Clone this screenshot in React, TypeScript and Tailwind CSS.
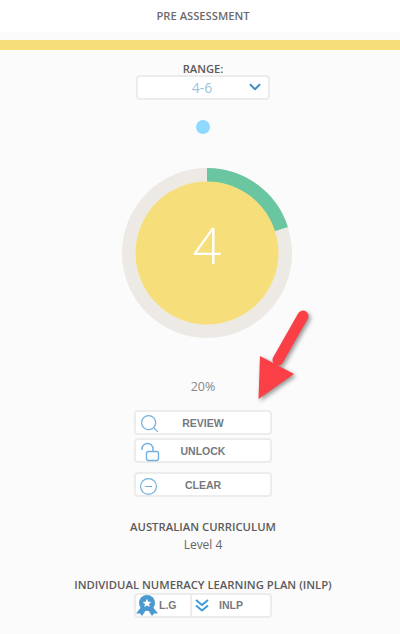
import React from 'react';
import { ChevronDown, Search, CircleMinus } from 'lucide-react';

function ActionButton({ icon, label, className = '' }: { icon: React.ReactNode; label: string; className?: string }) {
  return (
    <button
      className={`relative flex h-[25px] w-[138px] items-center justify-center rounded-[4px] border-2 border-[#ececec] bg-white pt-[2px] text-[10.5px] font-bold text-[#75797e] ${className}`}
      style={{ fontFamily: '"Liberation Sans", sans-serif' }}
    >
      {icon}
      {label}
    </button>
  );
}

export default function App() {
  return (
    <div
      className="relative h-[634px] w-[400px] overflow-hidden bg-[#fbfbfb] text-[#555]"
      style={{ fontFamily: '"Open Sans", "Liberation Sans", sans-serif' }}
    >
      <header className="flex h-[32px] items-center justify-center bg-white pl-[6px] text-[11.2px] font-semibold text-[#6b6b6b]">
        PRE ASSESSMENT
      </header>
      <div className="mt-[8px] h-[10px] bg-[#f6df7a]" />

      <main className="flex flex-col items-center pl-[6px]">
        <div className="mt-[11px] text-[11.2px] leading-[15px] font-semibold text-[#5a5a5a]">RANGE:</div>
        <div className="relative -mt-[1px] flex h-[25px] w-[134px] items-center justify-center rounded-[4px] border-2 border-[#ececec] bg-white pr-[2px] text-[14px] text-[#9dc3e0]">
          4-6
          <ChevronDown className="absolute right-[4px] top-[1px] h-[18px] w-[18px] text-[#3f8fc4]" strokeWidth={2.5} />
        </div>

        <div className="mt-[20px] h-[14px] w-[14px] rounded-full bg-[#8fd8ff]" />

        <div className="relative ml-[8px] mt-[34px] h-[170px] w-[170px]">
          <svg width="170" height="170" viewBox="0 0 170 170">
            <circle cx="85" cy="85" r="78" fill="none" stroke="#edeae5" strokeWidth="14" />
            <circle
              cx="85"
              cy="85"
              r="78"
              fill="none"
              stroke="#69c6a0"
              strokeWidth="14"
              strokeDasharray="98 392"
              transform="rotate(-90 85 85)"
            />
            <circle cx="85" cy="85" r="71.5" fill="#f6df7a" />
          </svg>
          <div className="absolute inset-0 flex items-center justify-center pb-[16px] text-[50px] font-light text-white">4</div>
        </div>

        <div className="mt-[41px] text-[12.500px] leading-[16px] text-[#888]">20%</div>

        <ActionButton
          className="mt-[15px]"
          label="REVIEW"
          icon={<Search className="absolute left-[3px] top-[1px] h-[21px] w-[21px] text-[#6fb1dc]" strokeWidth={1.4} />}
        />
        <ActionButton
          className="mt-[3px]"
          label="UNLOCK"
          icon={
            <svg className="absolute left-[5px] top-[2px] text-[#6fb1dc]" width="20" height="20" viewBox="0 0 20 20" fill="none" stroke="currentColor" strokeWidth="1.4">
              <rect x="5.500" y="9.500" width="12" height="9" rx="2" />
              <path d="M1 8 V7 a5.500 5.500 0 0 1 11 0 V9.500" />
            </svg>
          }
        />
        <ActionButton
          className="mt-[9px]"
          label="CLEAR"
          icon={<CircleMinus className="absolute left-[3px] top-[3px] h-[19px] w-[19px] text-[#6fb1dc]" strokeWidth={1.5} />}
        />

        <div className="mt-[22px] text-[11.3px] leading-[16px] font-semibold text-[#5a5a5a]">AUSTRALIAN CURRICULUM</div>
        <div className="mt-[1px] text-[12px] leading-[18px] text-[#666]">Level 4</div>

        <div className="mt-[23px] text-[11.3px] leading-[16px] font-semibold text-[#5a5a5a]">INDIVIDUAL NUMERACY LEARNING PLAN (INLP)</div>
        <div
          className="flex h-[25px] w-[138px] items-center rounded-[4px] border-2 border-[#ececec] bg-white text-[10.5px] font-bold text-[#75797e]"
          style={{ fontFamily: '"Liberation Sans", sans-serif' }}
        >
          <div className="flex h-full w-[56px] items-center gap-[1px] border-r-2 border-[#ececec]">
            <svg width="22" height="21" viewBox="0 0 22 21" className="shrink-0">
              <path d="M6 11 L0 18.500 L4 18.500 L6 21 L10 15 Z M16 11 L22 18.500 L18 18.500 L16 21 L12 15 Z" fill="#4a9ad0" />
              <circle cx="11" cy="8" r="8" fill="#4a9ad0" />
              <path d="M11 3.800 L12.300 6.800 L15.300 7 L13 9 L13.800 12 L11 10.400 L8.200 12 L9 9 L6.700 7 L9.700 6.800 Z" fill="#fff" />
            </svg>
            <span>L.G</span>
          </div>
          <svg className="ml-[3px] shrink-0 text-[#3f9ad6]" width="14" height="13" viewBox="0 0 14 13" fill="none" stroke="currentColor" strokeWidth="2">
            <path d="M1 1 L7 6 L13 1" />
            <path d="M1 6.500 L7 11.500 L13 6.500" />
          </svg>
          <span className="ml-[10px]">INLP</span>
        </div>
      </main>

      {/* red annotation arrow over the page */}
      <svg className="absolute left-[240px] top-[300px] drop-shadow-[2px_2px_2px_rgba(0,0,0,0.4)]" width="90" height="110" viewBox="0 0 90 110">
        <path d="M63 16 L38 60" stroke="#fb3f47" strokeWidth="11" strokeLinecap="round" />
        <path d="M20 56 L54 74 L18.500 99 Z" fill="#fb3f47" />
      </svg>
    </div>
  );
}
